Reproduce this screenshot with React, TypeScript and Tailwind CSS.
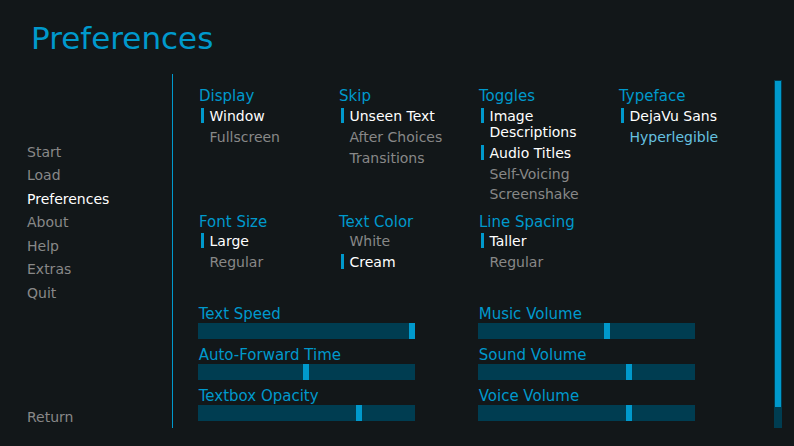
import React from "react";

type Opt = { label: string; selected?: boolean; hover?: boolean };

function Radio({ opt }: { opt: Opt }) {
  const color = opt.selected ? "text-white" : opt.hover ? "text-[#66c1e0]" : "text-[#888888]";
  return (
    <div className="flex py-[2.4px] leading-[16px] text-[14px]">
      <div className="w-[10.5px] shrink-0">
        {opt.selected && <div className="ml-[2px] w-[3px] h-[15px] bg-[#0099cc]" />}
      </div>
      <div className={`${color} w-[129.5px]`}>{opt.label}</div>
    </div>
  );
}

function Section({ title, opts, tight }: { title: string; opts: Opt[]; tight?: boolean }) {
  return (
    <div className="flex flex-col">
      <div className={`text-[15px] leading-[17px] text-[#0099cc] ${tight ? "mb-0" : "mb-[0.75px]"}`}>
        {title}
      </div>
      {opts.map((o) => (
        <Radio key={o.label} opt={o} />
      ))}
    </div>
  );
}

function Slider({ label, pos }: { label: string; pos: number }) {
  return (
    <div className="flex flex-col mb-[8.6px]">
      <div className="text-[15px] leading-[17px] text-[#0099cc] pl-[0.7px]">{label}</div>
      <div className="relative mt-[-0.3px] h-[15.7px] w-[217px] bg-[#003d51]">
        <div className="absolute top-0 h-full w-[6px] bg-[#0099cc]" style={{ left: pos }} />
      </div>
    </div>
  );
}

export default function App() {
  const nav = ["Start", "Load", "Preferences", "About", "Help", "Extras", "Quit"];
  return (
    <div className="w-[794px] h-[446px] bg-[#121719] overflow-hidden font-['DejaVu_Sans',sans-serif]">
      <div className="h-[74px] pl-[31px] pt-[19.6px] text-[31px] leading-[36px] text-[#0099cc]">
        Preferences
      </div>
      <div className="flex h-[354px]">
        <nav className="w-[171.5px] flex flex-col pl-[27px] pt-[66.7px] pb-[2.55px] text-[14px]">
          {nav.map((n) => (
            <div
              key={n}
              className={`leading-[23.5px] ${n === "Preferences" ? "text-white" : "text-[#888888]"}`}
            >
              {n}
            </div>
          ))}
          <div className="flex-1" />
          <div className="leading-[16px] text-[#888888]">Return</div>
        </nav>
        <div className="w-[1.5px] bg-[#0099cc]" />
        <div className="w-[601px] pl-[25px] pt-[14px]">
          <div className="grid grid-cols-[140px_140px_140px_140px] items-start ml-[1px]">
            <Section
              title="Display"
              opts={[{ label: "Window", selected: true }, { label: "Fullscreen" }]}
            />
            <Section
              title="Skip"
              opts={[
                { label: "Unseen Text", selected: true },
                { label: "After Choices" },
                { label: "Transitions" },
              ]}
            />
            <Section
              title="Toggles"
              opts={[
                { label: "Image Descriptions", selected: true },
                { label: "Audio Titles", selected: true },
                { label: "Self-Voicing" },
                { label: "Screenshake" },
              ]}
            />
            <Section
              title="Typeface"
              opts={[{ label: "DejaVu Sans", selected: true }, { label: "Hyperlegible", hover: true }]}
            />
          </div>
          <div className="grid grid-cols-[140px_140px_140px_140px] items-start mt-[8.8px] ml-[1px]">
            <Section
              tight
              title="Font Size"
              opts={[{ label: "Large", selected: true }, { label: "Regular" }]}
            />
            <Section
              tight
              title="Text Color"
              opts={[{ label: "White" }, { label: "Cream", selected: true }]}
            />
            <Section
              tight
              title="Line Spacing"
              opts={[{ label: "Taller", selected: true }, { label: "Regular" }]}
            />
          </div>
          <div className="grid grid-cols-[280px_280px] mt-[34.25px]">
            <div className="flex flex-col">
              <Slider label="Text Speed" pos={211} />
              <Slider label="Auto-Forward Time" pos={105.3} />
              <Slider label="Textbox Opacity" pos={158.3} />
            </div>
            <div className="flex flex-col">
              <Slider label="Music Volume" pos={126.3} />
              <Slider label="Sound Volume" pos={147.6} />
              <Slider label="Voice Volume" pos={147.6} />
            </div>
          </div>
        </div>
        <div className="pt-[6px] h-full">
          <div className="w-[8px] h-full bg-[#003d51] pt-[0.7px] px-[0.7px]">
            <div className="h-[326px] w-full bg-[#0099cc]" />
          </div>
        </div>
      </div>
    </div>
  );
}
